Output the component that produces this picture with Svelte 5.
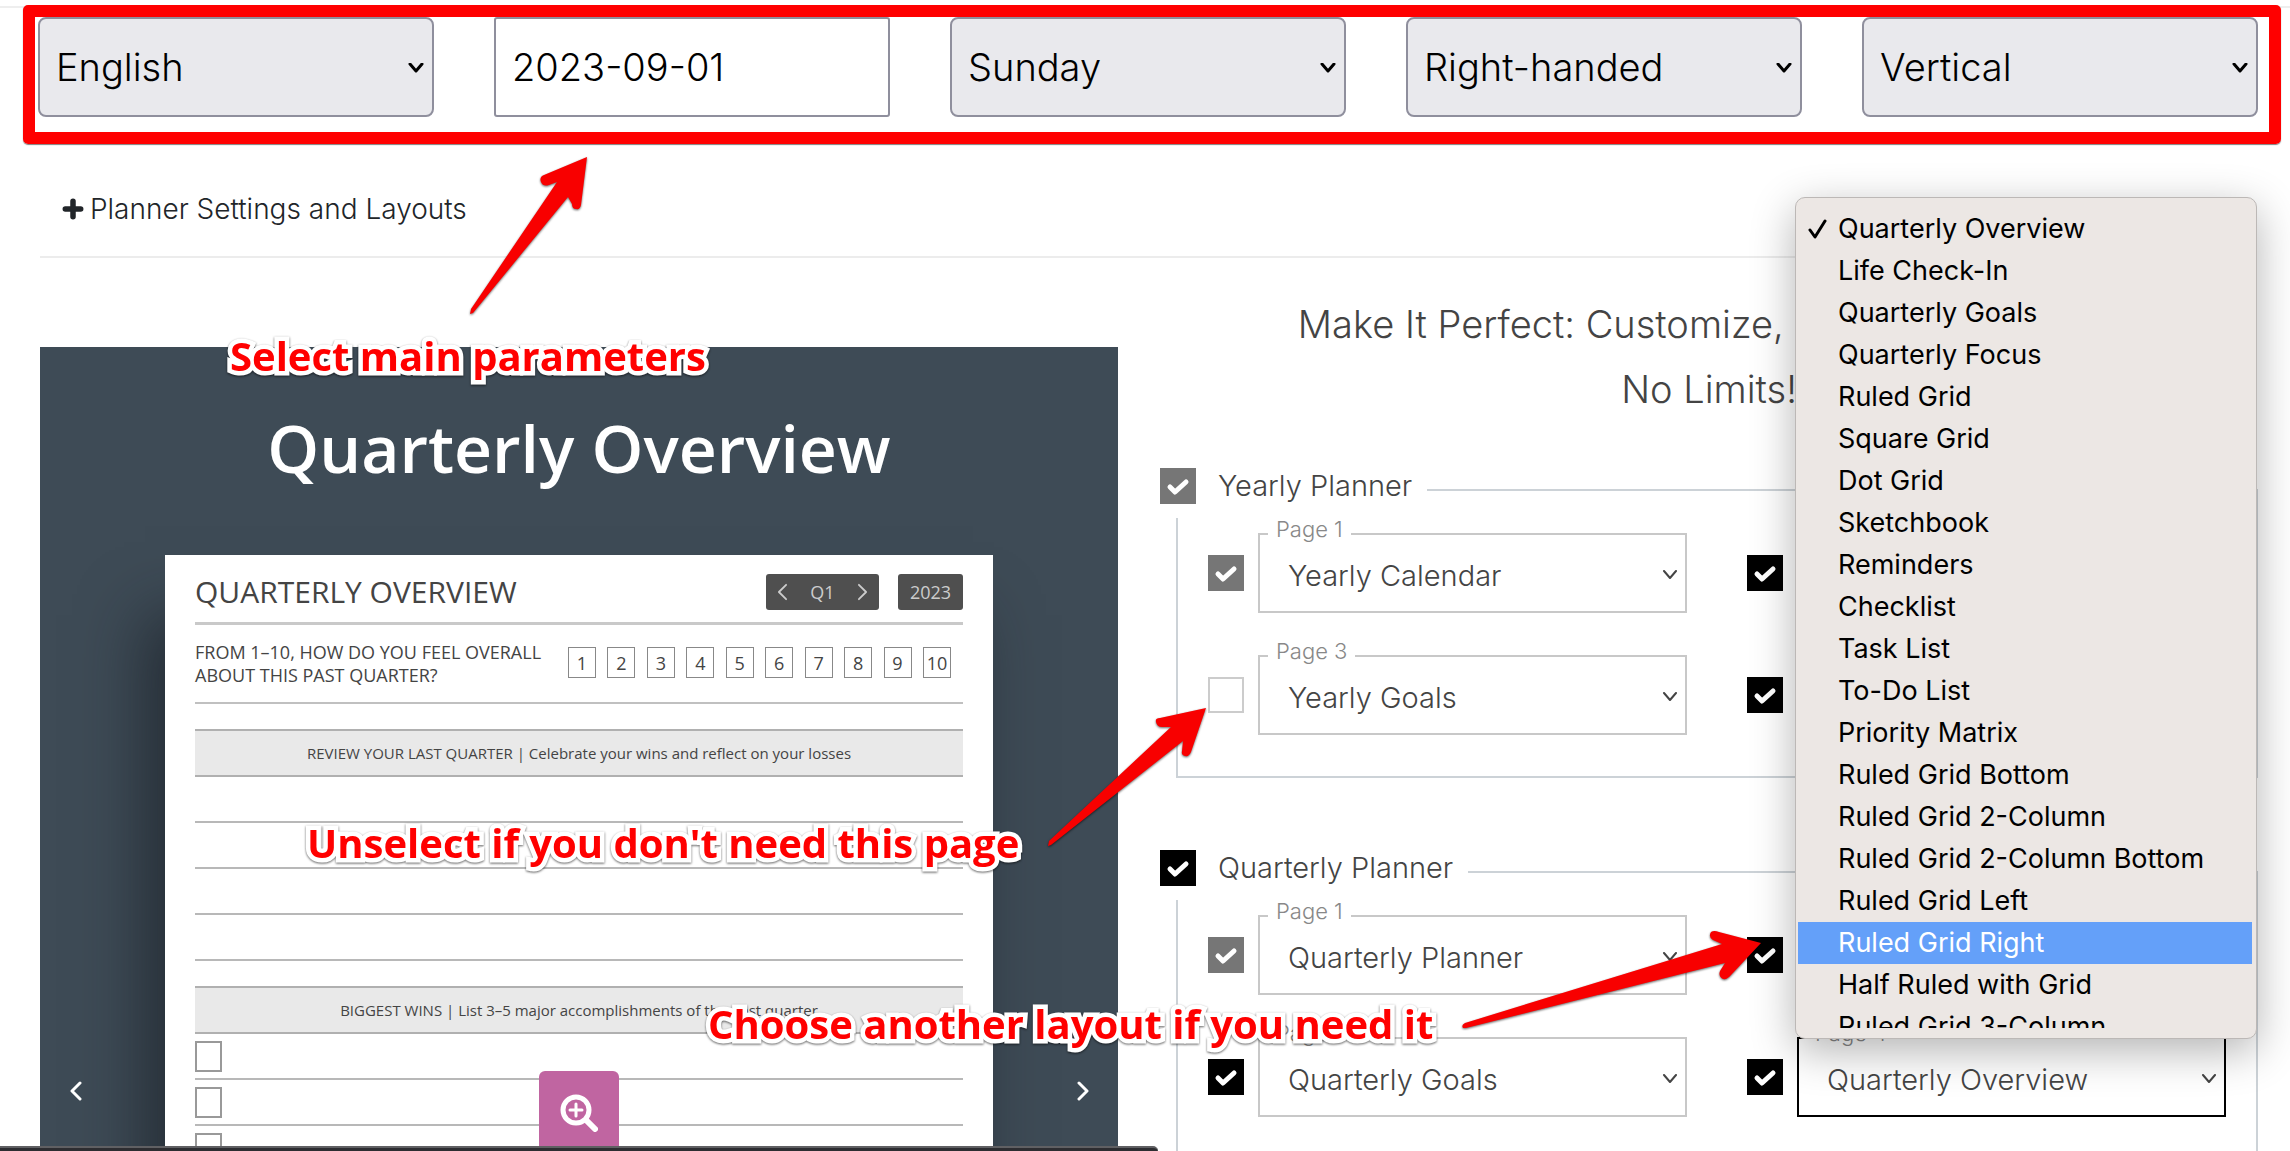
<script lang="ts">
	const parameters = [
		{ name: 'language', label: 'Language', options: ['English', 'Deutsch', 'Español'] },
		{ name: 'start', label: 'Start date', value: '2023-09-01' },
		{ name: 'week', label: 'Week starts on', options: ['Sunday', 'Monday'] },
		{ name: 'hand', label: 'Hand', options: ['Right-handed', 'Left-handed'] },
		{ name: 'orientation', label: 'Orientation', options: ['Vertical', 'Horizontal'] }
	]

	const layouts = [
		'Quarterly Overview',
		'Life Check-In',
		'Quarterly Goals',
		'Quarterly Focus',
		'Ruled Grid',
		'Square Grid',
		'Dot Grid',
		'Sketchbook',
		'Reminders',
		'Checklist',
		'Task List',
		'To-Do List',
		'Priority Matrix',
		'Ruled Grid Bottom',
		'Ruled Grid 2-Column',
		'Ruled Grid 2-Column Bottom',
		'Ruled Grid Left',
		'Ruled Grid Right',
		'Half Ruled with Grid',
		'Ruled Grid 3-Column'
	]

	const planners = [
		{
			title: 'Yearly Planner',
			locked: true,
			pages: [
				{ layout: 'Yearly Calendar', checked: true, locked: true },
				{ layout: 'Yearly Overview', checked: true },
				{ layout: 'Yearly Goals', checked: false },
				{ layout: 'Yearly Focus', checked: true }
			]
		},
		{
			title: 'Quarterly Planner',
			locked: false,
			pages: [
				{ layout: 'Quarterly Planner', checked: true, locked: true },
				{ layout: 'Life Check-In', checked: true },
				{ layout: 'Quarterly Goals', checked: true },
				{ layout: 'Quarterly Overview', checked: true, open: true }
			]
		}
	]

	const scores = [1, 2, 3, 4, 5, 6, 7, 8, 9, 10]
	const hovered = 'Ruled Grid Right'
</script>

{#snippet chevron()}
	<svg class="chevron" viewBox="0 0 16 10" aria-hidden="true"><path d="M2 1l6 7 6-7" /></svg>
{/snippet}

{#snippet tick(label, checked, locked)}
	<span class="tick" class:locked>
		<input type="checkbox" aria-label={label} {checked} disabled={locked} />
		{#if checked}
			<svg viewBox="0 0 36 36" aria-hidden="true"><path d="M10 19l5 5 11-10" /></svg>
		{/if}
	</span>
{/snippet}

<main>
	<section class="parameters">
		{#each parameters as item}
			<div class="control">
				{#if item.options}
					<select name={item.name} aria-label={item.label}>
						{#each item.options as option}
							<option>{option}</option>
						{/each}
					</select>
					{@render chevron()}
				{:else}
					<input type="text" name={item.name} aria-label={item.label} value={item.value} />
				{/if}
			</div>
		{/each}
	</section>

	<button class="accordion">
		<svg viewBox="0 0 20 20" aria-hidden="true"><path d="M10 3v14M3 10h14" /></svg>
		Planner Settings and Layouts
	</button>

	<div class="columns">
		<section class="preview">
			<h1>Quarterly Overview</h1>
			<div class="paper">
				<header>
					<h2>QUARTERLY OVERVIEW</h2>
					<div class="badge quarter">
						<svg viewBox="0 0 12 20" aria-hidden="true"><path d="M10 2L2 10l8 8" /></svg>
						Q1
						<svg viewBox="0 0 12 20" aria-hidden="true"><path d="M2 2l8 8-8 8" /></svg>
					</div>
					<div class="badge">2023</div>
				</header>
				<div class="question">
					<p>FROM 1–10, HOW DO YOU FEEL OVERALL<br />ABOUT THIS PAST QUARTER?</p>
					<div class="scores">
						{#each scores as score}
							<span>{score}</span>
						{/each}
					</div>
				</div>
				<div class="band">REVIEW YOUR LAST QUARTER | Celebrate your wins and reflect on your losses</div>
				{#each [1, 2, 3, 4] as _}
					<div class="line"></div>
				{/each}
				<div class="band">BIGGEST WINS | List 3–5 major accomplishments of the past quarter</div>
				{#each [1, 2, 3] as _}
					<div class="line"><i></i></div>
				{/each}
			</div>
			<button class="slide previous" aria-label="Previous page">
				<svg viewBox="0 0 12 20" aria-hidden="true"><path d="M10 2L2 10l8 8" /></svg>
			</button>
			<button class="slide next" aria-label="Next page">
				<svg viewBox="0 0 12 20" aria-hidden="true"><path d="M2 2l8 8-8 8" /></svg>
			</button>
			<button class="zoom" aria-label="Zoom in">
				<svg viewBox="0 0 38 38" aria-hidden="true">
					<circle cx="16" cy="16" r="13" stroke-width="5" />
					<path d="M16 10v12M10 16h12" stroke-width="3" />
					<path d="M26 26l9 9" stroke-width="6" />
				</svg>
			</button>
		</section>

		<section class="builder">
			<h2>
				Make It Perfect: Customize, Arrange and Enjoy<br />
				No Limits!
			</h2>
			{#each planners as planner}
				<fieldset class="planner">
					<legend>
						{@render tick(planner.title, true, planner.locked)}
						{planner.title}
					</legend>
					{#each planner.pages as page, i}
						<div class="page">
							{@render tick(`Include page ${i + 1}`, page.checked, page.locked)}
							<div class="field" class:open={page.open}>
								<label for={`${planner.title}-${i}`}>Page {i + 1}</label>
								<select id={`${planner.title}-${i}`}>
									<option>{page.layout}</option>
								</select>
								{@render chevron()}
								{#if page.open}
									<div class="menu">
										<ul role="listbox" aria-label="Layout">
											{#each layouts as layout}
												<li role="option" aria-selected={layout === page.layout} class:hovered={layout === hovered}>
													{#if layout === page.layout}
														<svg viewBox="0 0 20 20" aria-hidden="true"><path d="M2 11l5 7L17 2" /></svg>
													{/if}
													{layout}
												</li>
											{/each}
										</ul>
									</div>
								{/if}
							</div>
						</div>
					{/each}
				</fieldset>
			{/each}
		</section>
	</div>

	<div class="status"></div>

	<svg class="arrows" width="1800" height="1151" viewBox="0 0 1800 1151" aria-hidden="true">
		<path d="M470 314L471 309L557 182L549 185Q543 187 541 182Q539 177 544 175L587 157L581 205Q580 210 576 209Q572 209 572 204L568 197L473 313Z" />
		<path d="M1048 846L1049 841L1171 727L1162 727Q1157 727 1156 722Q1155 718 1160 718L1206 708L1191 752Q1189 757 1185 756Q1181 755 1182 751L1183 741L1051 845Z" />
		<path d="M1463 1028Q1461 1025 1465 1023L1722 944L1713 940Q1708 937 1711 932Q1714 930 1719 932L1761 943L1731 975Q1727 980 1723 979Q1718 976 1720 971L1725 963L1466 1028Z" />
	</svg>
	<p class="note first">Select main parameters</p>
	<p class="note second">Unselect if you don't need this page</p>
	<p class="note third">Choose another layout if you need it</p>
</main>

<style>
	:global(body) {
		margin: 0;
		background: #fff;
	}

	main {
		position: relative;
		height: 100vh;
		padding: 17px 32px 0 38px;
		overflow: hidden;
		box-sizing: border-box;
		font-family: Inter, 'Open Sans', sans-serif;
		color: #212529;
	}

	main::before {
		content: '';
		position: absolute;
		top: 6px;
		left: 0;
		right: 0;
		height: 2px;
		background: #eee;
	}

	main :global(*) {
		box-sizing: border-box;
	}

	svg {
		fill: none;
		stroke: currentColor;
		stroke-linecap: round;
		stroke-linejoin: round;
	}

	select,
	button,
	input {
		margin: 0;
		font: inherit;
		color: inherit;
		appearance: none;
	}

	.parameters {
		position: relative;
		display: grid;
		grid-template-columns: repeat(5, 1fr);
		gap: 60px;
	}

	.parameters::after {
		content: '';
		position: absolute;
		inset: -12px -23px -27px -15px;
		border: 12px solid #f00;
		border-radius: 5px;
		box-shadow: 0 1px 1px rgba(0, 0, 0, 0.5);
		pointer-events: none;
	}

	.control {
		position: relative;
		font-size: 38px;
		font-weight: 300;
		color: #000;
	}

	.control select,
	.control input {
		display: block;
		width: 100%;
		height: 100px;
		padding: 0 16px;
		border: 2px solid #8f8f9d;
		border-radius: 8px;
		background: #e9e9ed;
	}

	.control input {
		border-radius: 3px;
		background: #fff;
	}

	.chevron {
		position: absolute;
		top: 50%;
		right: 10px;
		width: 16px;
		height: 10px;
		margin-top: -4px;
		stroke-width: 3;
		pointer-events: none;
	}

	.accordion {
		display: flex;
		align-items: center;
		gap: 6px;
		width: calc(100% - 4px);
		height: 97px;
		margin: 44px 2px 0;
		padding: 0 22px;
		border: 0;
		border-bottom: 2px solid #ececec;
		border-radius: 16px 16px 0 0;
		background: #fff;
		font-size: 28px;
		font-weight: 300;
	}

	.accordion svg {
		width: 22px;
		height: 22px;
		stroke-width: 5;
	}

	.columns {
		display: grid;
		grid-template-columns: 1078fr 1098fr;
		gap: 42px;
		padding-left: 2px;
	}

	.preview {
		position: relative;
		height: 830px;
		margin-top: 89px;
		padding: 60px 125px 0;
		overflow: hidden;
		background: #3e4b56;
		font-family: 'Open Sans', sans-serif;
		text-align: center;
	}

	.preview h1 {
		margin: 0;
		font-size: 66px;
		font-weight: 600;
		line-height: 80px;
		color: #fff;
	}

	.paper {
		height: 700px;
		margin-top: 68px;
		padding: 0 30px;
		background: #fff;
		box-shadow: -20px 60px 60px rgba(20, 25, 32, 0.6);
		font-size: 15px;
		color: #444;
	}

	.paper header {
		display: flex;
		align-items: center;
		gap: 19px;
		height: 70px;
		padding-top: 6px;
		border-bottom: 3px solid #c9c9c9;
	}

	.paper h2 {
		flex: 1;
		margin: 0;
		font-size: 30px;
		font-weight: 400;
		text-align: left;
	}

	.badge {
		display: flex;
		align-items: center;
		justify-content: center;
		width: 65px;
		height: 36px;
		border-radius: 3px;
		background: #4f4f4f;
		font-size: 18px;
		color: #ccc;
	}

	.badge.quarter {
		justify-content: space-between;
		width: 113px;
		padding: 0 11px;
	}

	.badge svg {
		width: 11px;
		height: 18px;
		stroke-width: 2;
	}

	.question {
		display: flex;
		align-items: center;
		justify-content: space-between;
		height: 79px;
		padding-right: 12px;
		border-bottom: 2px solid #c0c0c0;
		font-size: 18px;
	}

	.question p {
		margin: 0;
		line-height: 23px;
		text-align: left;
		white-space: nowrap;
	}

	.scores {
		display: flex;
		justify-content: space-between;
		width: 383px;
		margin-bottom: 2px;
	}

	.scores span {
		width: 28px;
		height: 31px;
		border: 1px solid #888;
		line-height: 30px;
	}

	.band {
		height: 48px;
		margin-top: 25px;
		border: solid #b0b0b0;
		border-width: 2px 0;
		background: #e9e9e9;
		line-height: 44px;
		white-space: nowrap;
	}

	.line {
		height: 46px;
		padding-top: 7px;
		border-bottom: 2px solid #b8b8b8;
	}

	.line i {
		display: block;
		width: 27px;
		height: 31px;
		border: 2px solid #999;
	}

	.slide {
		position: absolute;
		top: 728px;
		width: 40px;
		height: 36px;
		padding: 0;
		border: 0;
		background: none;
		color: #fff;
	}

	.slide.previous {
		left: 16px;
	}

	.slide.next {
		right: 15px;
	}

	.slide svg {
		width: 12px;
		height: 20px;
		stroke-width: 3;
	}

	.zoom {
		position: absolute;
		top: 724px;
		left: 499px;
		width: 80px;
		height: 88px;
		padding: 0;
		border: 0;
		border-radius: 6px;
		background: #c065a1;
		color: #fff;
	}

	.zoom svg {
		width: 38px;
		height: 38px;
	}

	.builder h2 {
		margin: 34px 0 40px;
		font-size: 38px;
		font-weight: 300;
		line-height: 65px;
		text-align: center;
		color: #444;
	}

	.planner {
		display: grid;
		grid-template-columns: 1fr 1fr;
		gap: 42px 60px;
		min-width: 0;
		margin: 0 0 66px 16px;
		padding: 15px 30px 41px;
		border: 2px solid #ccd2d7;
	}

	.planner legend {
		display: flex;
		align-items: center;
		gap: 22px;
		height: 56px;
		margin-left: -48px;
		padding: 0 15px 9px 0;
		background: #fff;
		font-size: 29px;
		font-weight: 300;
		color: #444;
	}

	.tick {
		position: relative;
		display: block;
		width: 36px;
		height: 36px;
	}

	.tick input {
		display: block;
		width: 36px;
		height: 36px;
		border: 2px solid #ccc;
		background: #fff;
	}

	.tick input:checked {
		border: 0;
		background: #000;
	}

	.tick.locked input {
		background: #767676;
	}

	.tick svg {
		position: absolute;
		inset: 0;
		stroke: #fff;
		stroke-width: 5;
		pointer-events: none;
	}

	.page {
		display: flex;
		align-items: center;
		gap: 14px;
	}

	.field {
		position: relative;
		flex: 1;
		border: 2px solid #c8c8c8;
		color: #444;
	}

	.field.open {
		border-color: #000;
	}

	.field label {
		position: absolute;
		top: -20px;
		left: 8px;
		padding: 0 8px;
		background: #fff;
		font-size: 22px;
		font-weight: 300;
		line-height: 28px;
		color: #888;
	}

	.field select {
		display: block;
		width: 100%;
		height: 76px;
		padding: 4px 28px 0;
		border: 0;
		background: none;
		font-size: 29px;
		font-weight: 300;
	}

	.field .chevron {
		right: 7px;
		margin-top: -3px;
		stroke-width: 2;
	}

	.menu {
		position: absolute;
		bottom: 100%;
		left: -4px;
		z-index: 1;
		width: 462px;
		padding: 10px 4px 10px 2px;
		border: 1px solid #bcb8b6;
		border-radius: 10px;
		background: #ece7e4;
		box-shadow: 0 12px 44px rgba(0, 0, 0, 0.3);
		font-size: 27px;
		color: #000;
	}

	.menu ul {
		height: 820px;
		margin: 0;
		padding: 0;
		overflow: hidden;
		list-style: none;
	}

	.menu li {
		position: relative;
		height: 42px;
		padding-left: 40px;
		line-height: 42px;
		white-space: nowrap;
	}

	.menu li.hovered {
		background: #64a0f9;
		color: #fff;
	}

	.menu svg {
		position: absolute;
		top: 11px;
		left: 10px;
		width: 20px;
		height: 20px;
		stroke-width: 3;
	}

	.status {
		position: absolute;
		bottom: 0;
		left: 0;
		width: 1158px;
		height: 5px;
		border-top: 2px solid #606063;
		border-top-right-radius: 5px;
		background: #2d2d31;
	}

	.arrows {
		position: absolute;
		top: 0;
		left: 0;
		pointer-events: none;
		filter: drop-shadow(0 1px 1px rgba(0, 0, 0, 0.6));
	}

	.arrows path {
		fill: #f80000;
		stroke: none;
	}

	.note {
		position: absolute;
		z-index: 2;
		margin: 0;
		font-family: 'Open Sans', sans-serif;
		font-size: 40px;
		font-weight: 700;
		line-height: 56px;
		white-space: nowrap;
		color: #f00;
		-webkit-text-stroke: 9px #fff;
		paint-order: stroke fill;
		filter: drop-shadow(0 1px 1px rgba(0, 0, 0, 0.6));
	}

	.note.first {
		top: 328px;
		left: 230px;
	}

	.note.second {
		top: 815px;
		left: 307px;
	}

	.note.third {
		top: 996px;
		left: 708px;
	}
</style>
